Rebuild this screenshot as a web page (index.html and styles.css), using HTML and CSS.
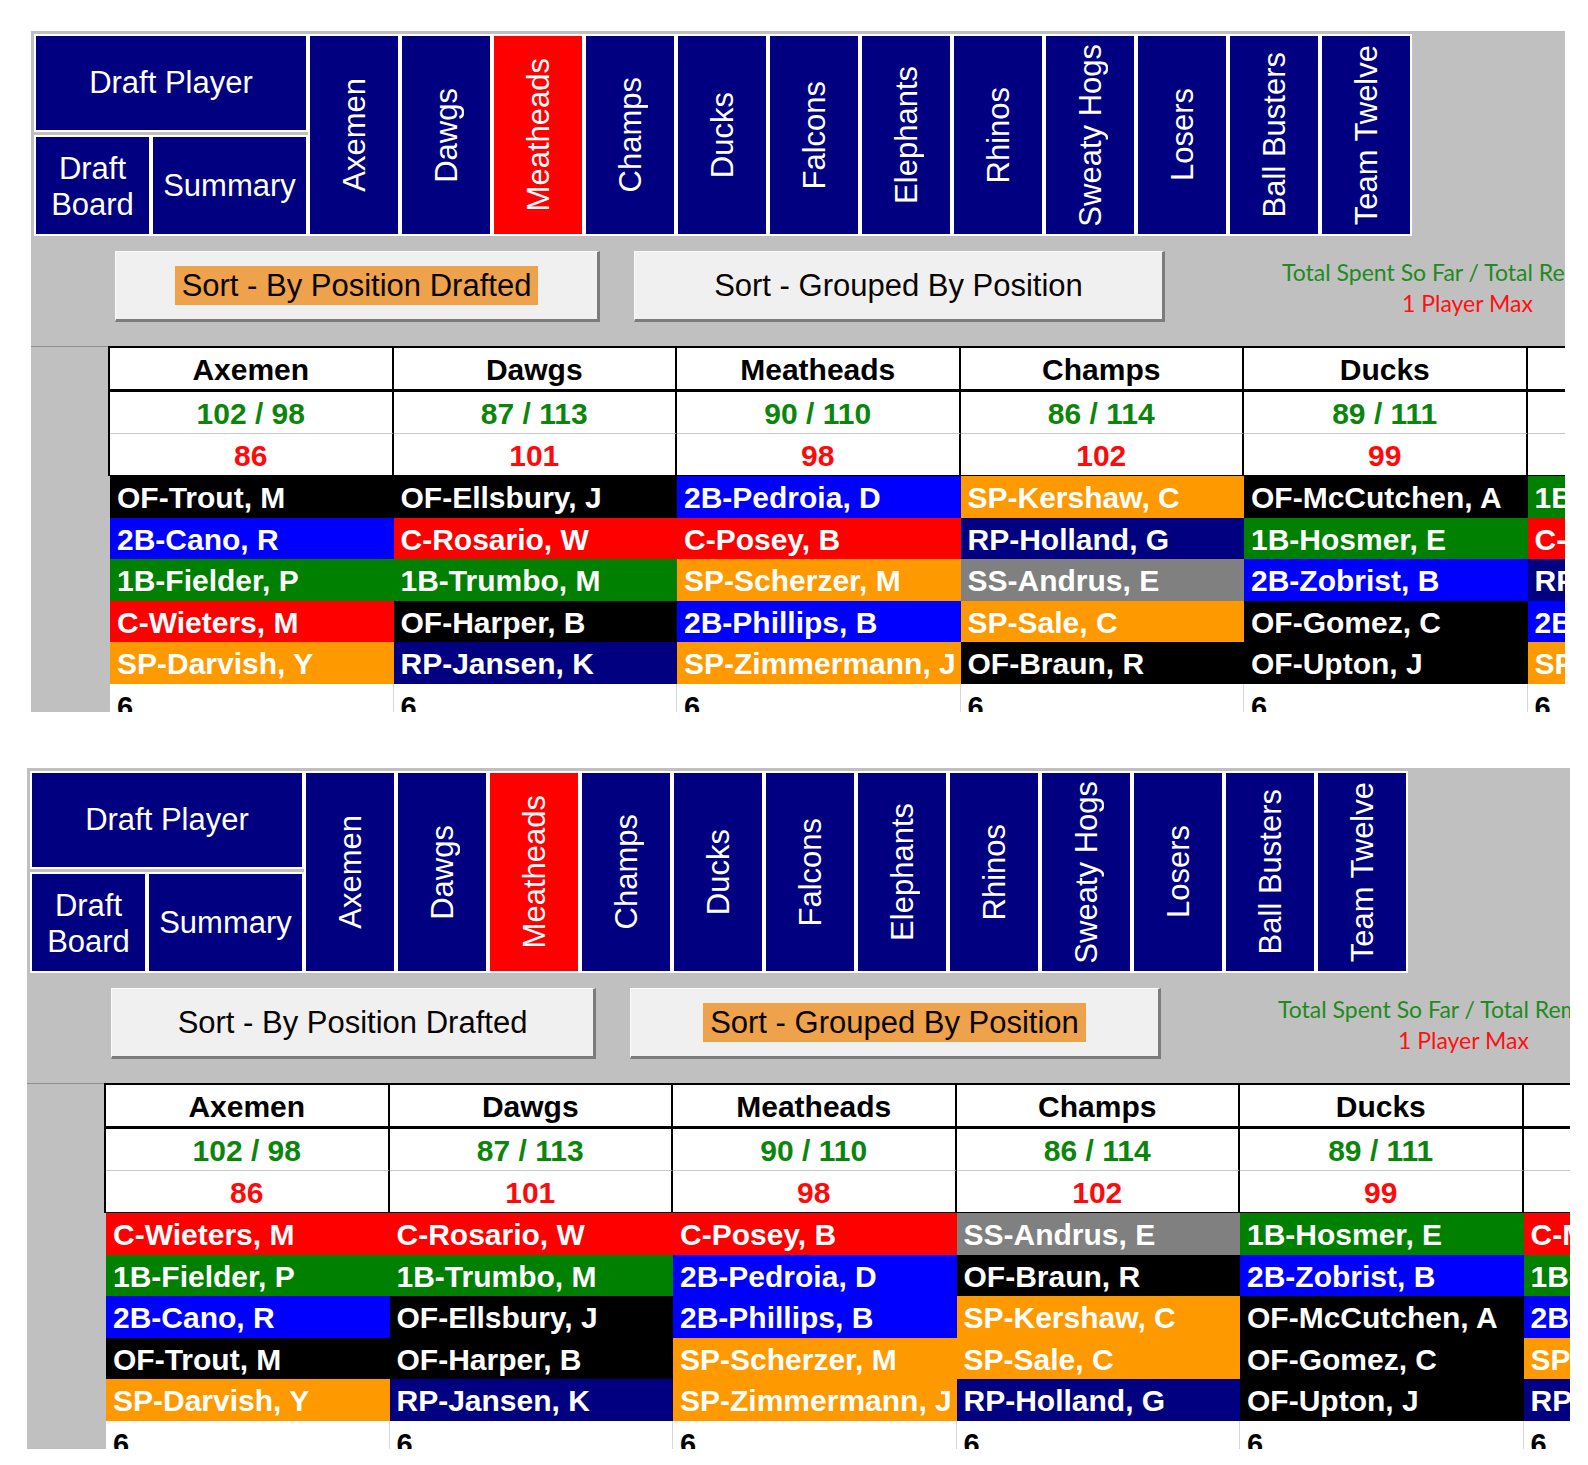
FILE: index.html
```html
<!DOCTYPE html>
<html>
<head>
<meta charset="utf-8">
<title>Draft Board</title>
<link rel="stylesheet" href="styles.css">
</head>
<body>

<div class="panel panel-a">
  <div class="nav">
    <div class="nav-left">
      <div class="nbtn draft-player">Draft Player</div>
      <div class="nav-left-row">
        <div class="nbtn draft-board">Draft<br>Board</div>
        <div class="nbtn summary">Summary</div>
      </div>
    </div>
    <div class="tab"><span>Axemen</span></div>
    <div class="tab"><span>Dawgs</span></div>
    <div class="tab tab-active"><span>Meatheads</span></div>
    <div class="tab"><span>Champs</span></div>
    <div class="tab"><span>Ducks</span></div>
    <div class="tab"><span>Falcons</span></div>
    <div class="tab"><span>Elephants</span></div>
    <div class="tab"><span>Rhinos</span></div>
    <div class="tab"><span>Sweaty Hogs</span></div>
    <div class="tab"><span>Losers</span></div>
    <div class="tab"><span>Ball Busters</span></div>
    <div class="tab"><span>Team Twelve</span></div>
  </div>
  <div class="sort-row">
    <div class="sort-btn sort-1"><span class="sort-label hl">Sort - By Position Drafted</span></div>
    <div class="sort-btn sort-2"><span class="sort-label">Sort - Grouped By Position</span></div>
    <div class="legend">
      <div class="legend-green">Total Spent So Far / Total Remaining</div>
      <div class="legend-red">1 Player Max</div>
    </div>
  </div>
  <div class="board">
    <div class="stripe"></div>
    <div class="teams">
      <div class="team first">
        <div class="c-name">Axemen</div>
        <div class="c-spent">102 / 98</div>
        <div class="c-max">86</div>
        <div class="p of">OF-Trout, M</div>
        <div class="p b2">2B-Cano, R</div>
        <div class="p b1">1B-Fielder, P</div>
        <div class="p c">C-Wieters, M</div>
        <div class="p sp">SP-Darvish, Y</div>
        <div class="c-count">6</div>
      </div>
      <div class="team">
        <div class="c-name">Dawgs</div>
        <div class="c-spent">87 / 113</div>
        <div class="c-max">101</div>
        <div class="p of">OF-Ellsbury, J</div>
        <div class="p c">C-Rosario, W</div>
        <div class="p b1">1B-Trumbo, M</div>
        <div class="p of">OF-Harper, B</div>
        <div class="p rp">RP-Jansen, K</div>
        <div class="c-count">6</div>
      </div>
      <div class="team">
        <div class="c-name">Meatheads</div>
        <div class="c-spent">90 / 110</div>
        <div class="c-max">98</div>
        <div class="p b2">2B-Pedroia, D</div>
        <div class="p c">C-Posey, B</div>
        <div class="p sp">SP-Scherzer, M</div>
        <div class="p b2">2B-Phillips, B</div>
        <div class="p sp">SP-Zimmermann, J</div>
        <div class="c-count">6</div>
      </div>
      <div class="team">
        <div class="c-name">Champs</div>
        <div class="c-spent">86 / 114</div>
        <div class="c-max">102</div>
        <div class="p sp">SP-Kershaw, C</div>
        <div class="p rp">RP-Holland, G</div>
        <div class="p ss">SS-Andrus, E</div>
        <div class="p sp">SP-Sale, C</div>
        <div class="p of">OF-Braun, R</div>
        <div class="c-count">6</div>
      </div>
      <div class="team">
        <div class="c-name">Ducks</div>
        <div class="c-spent">89 / 111</div>
        <div class="c-max">99</div>
        <div class="p of">OF-McCutchen, A</div>
        <div class="p b1">1B-Hosmer, E</div>
        <div class="p b2">2B-Zobrist, B</div>
        <div class="p of">OF-Gomez, C</div>
        <div class="p of">OF-Upton, J</div>
        <div class="c-count">6</div>
      </div>
      <div class="team">
        <div class="c-name">Falcons</div>
        <div class="c-spent">91 / 109</div>
        <div class="c-max">97</div>
        <div class="p b1">1B-Goldschmidt, P</div>
        <div class="p c">C-Mauer, J</div>
        <div class="p rp">RP-Kimbrel, C</div>
        <div class="p b2">2B-Kinsler, I</div>
        <div class="p sp">SP-Verlander, J</div>
        <div class="c-count">6</div>
      </div>
    </div>
  </div>
</div>

<div class="panel panel-b">
  <div class="nav">
    <div class="nav-left">
      <div class="nbtn draft-player">Draft Player</div>
      <div class="nav-left-row">
        <div class="nbtn draft-board">Draft<br>Board</div>
        <div class="nbtn summary">Summary</div>
      </div>
    </div>
    <div class="tab"><span>Axemen</span></div>
    <div class="tab"><span>Dawgs</span></div>
    <div class="tab tab-active"><span>Meatheads</span></div>
    <div class="tab"><span>Champs</span></div>
    <div class="tab"><span>Ducks</span></div>
    <div class="tab"><span>Falcons</span></div>
    <div class="tab"><span>Elephants</span></div>
    <div class="tab"><span>Rhinos</span></div>
    <div class="tab"><span>Sweaty Hogs</span></div>
    <div class="tab"><span>Losers</span></div>
    <div class="tab"><span>Ball Busters</span></div>
    <div class="tab"><span>Team Twelve</span></div>
  </div>
  <div class="sort-row">
    <div class="sort-btn sort-1"><span class="sort-label">Sort - By Position Drafted</span></div>
    <div class="sort-btn sort-2"><span class="sort-label hl">Sort - Grouped By Position</span></div>
    <div class="legend">
      <div class="legend-green">Total Spent So Far / Total Remaining</div>
      <div class="legend-red">1 Player Max</div>
    </div>
  </div>
  <div class="board">
    <div class="stripe"></div>
    <div class="teams">
      <div class="team first">
        <div class="c-name">Axemen</div>
        <div class="c-spent">102 / 98</div>
        <div class="c-max">86</div>
        <div class="p c">C-Wieters, M</div>
        <div class="p b1">1B-Fielder, P</div>
        <div class="p b2">2B-Cano, R</div>
        <div class="p of">OF-Trout, M</div>
        <div class="p sp">SP-Darvish, Y</div>
        <div class="c-count">6</div>
      </div>
      <div class="team">
        <div class="c-name">Dawgs</div>
        <div class="c-spent">87 / 113</div>
        <div class="c-max">101</div>
        <div class="p c">C-Rosario, W</div>
        <div class="p b1">1B-Trumbo, M</div>
        <div class="p of">OF-Ellsbury, J</div>
        <div class="p of">OF-Harper, B</div>
        <div class="p rp">RP-Jansen, K</div>
        <div class="c-count">6</div>
      </div>
      <div class="team">
        <div class="c-name">Meatheads</div>
        <div class="c-spent">90 / 110</div>
        <div class="c-max">98</div>
        <div class="p c">C-Posey, B</div>
        <div class="p b2">2B-Pedroia, D</div>
        <div class="p b2">2B-Phillips, B</div>
        <div class="p sp">SP-Scherzer, M</div>
        <div class="p sp">SP-Zimmermann, J</div>
        <div class="c-count">6</div>
      </div>
      <div class="team">
        <div class="c-name">Champs</div>
        <div class="c-spent">86 / 114</div>
        <div class="c-max">102</div>
        <div class="p ss">SS-Andrus, E</div>
        <div class="p of">OF-Braun, R</div>
        <div class="p sp">SP-Kershaw, C</div>
        <div class="p sp">SP-Sale, C</div>
        <div class="p rp">RP-Holland, G</div>
        <div class="c-count">6</div>
      </div>
      <div class="team">
        <div class="c-name">Ducks</div>
        <div class="c-spent">89 / 111</div>
        <div class="c-max">99</div>
        <div class="p b1">1B-Hosmer, E</div>
        <div class="p b2">2B-Zobrist, B</div>
        <div class="p of">OF-McCutchen, A</div>
        <div class="p of">OF-Gomez, C</div>
        <div class="p of">OF-Upton, J</div>
        <div class="c-count">6</div>
      </div>
      <div class="team">
        <div class="c-name">Falcons</div>
        <div class="c-spent">91 / 109</div>
        <div class="c-max">97</div>
        <div class="p c">C-Mauer, J</div>
        <div class="p b1">1B-Goldschmidt, P</div>
        <div class="p b2">2B-Kinsler, I</div>
        <div class="p sp">SP-Verlander, J</div>
        <div class="p rp">RP-Kimbrel, C</div>
        <div class="c-count">6</div>
      </div>
    </div>
  </div>
</div>

</body>
</html>
```

FILE: styles.css
```css
* { box-sizing: border-box; }

html, body {
  margin: 0;
  padding: 0;
  background: #ffffff;
}

body {
  font-family: "Liberation Sans", Arial, sans-serif;
  width: 1588px;
  min-height: 1465px;
  overflow: hidden;
}

.panel {
  background: #c0c0c0;
  height: 681px;
  overflow: hidden;
  padding-top: 3px;
}

.panel-a {
  margin-left: 31px;
  margin-top: 31px;
  width: 1534px;
}

.panel-b {
  margin-left: 27px;
  margin-top: 56px;
  width: 1543px;
}

/* ---------- navigation ---------- */
.nav {
  display: flex;
  padding-left: 3px;
  height: 202px;
}

.nav-left {
  width: 274px;
  flex: none;
  display: flex;
  flex-direction: column;
  gap: 3px;
}

.nav-left-row {
  display: flex;
  flex: 1;
}

.nbtn {
  background: #000080;
  color: #ffffff;
  border: 2px solid #ffffff;
  font-size: 31px;
  display: flex;
  align-items: center;
  justify-content: center;
  text-align: center;
}

.draft-player {
  height: 98px;
}

.draft-board {
  width: 117px;
  line-height: 36px;
  padding-top: 2px;
}

.summary {
  flex: 1;
}

.tab {
  width: 92px;
  flex: none;
  background: #000080;
  color: #ffffff;
  border: 2px solid #ffffff;
  display: flex;
  align-items: center;
  justify-content: center;
  font-size: 31px;
  white-space: nowrap;
}

.tab span {
  writing-mode: vertical-rl;
  transform: rotate(180deg);
  line-height: 1;
}

.tab-active {
  background: #ff0000;
}

/* ---------- sort row ---------- */
.sort-row {
  display: flex;
  margin-top: 15px;
  height: 71px;
}

.sort-btn {
  flex: none;
  background: #f0f0f0;
  border-top: 1px solid #fbfbfb;
  border-left: 1px solid #fbfbfb;
  border-right: 3px solid #7c7c7c;
  border-bottom: 3px solid #7c7c7c;
  display: flex;
  align-items: center;
  justify-content: center;
  font-size: 31px;
  color: #0a0505;
}

.sort-1 {
  margin-left: 84px;
  width: 485px;
}

.sort-2 {
  margin-left: 34px;
  width: 531px;
}

.sort-label {
  line-height: 39px;
  padding: 0 7px;
  white-space: nowrap;
}

.hl {
  background: #eda24b;
}

.legend {
  flex: none;
  margin-left: 117px;
  padding-top: 6px;
  font-family: Lato, "Open Sans", sans-serif;
  font-size: 23px;
  line-height: 31px;
  white-space: nowrap;
}

.legend-green {
  color: #1f8a1f;
}

.legend-red {
  color: #ff1010;
  padding-left: 120px;
}

/* ---------- board ---------- */
.board {
  display: flex;
  margin-top: 24px;
  border-top: 1px solid #8e8e8e;
}

.stripe {
  width: 79px;
  flex: none;
}

.teams {
  display: flex;
  background: #ffffff;
  margin-top: -1px;
}

.team {
  width: 283.5px;
  flex: none;
  display: flex;
  flex-direction: column;
}

.c-name,
.c-spent,
.c-max {
  text-align: center;
  font-weight: bold;
  font-size: 30px;
  border-right: 2px solid #000000;
  background: #ffffff;
}

.c-name {
  height: 46px;
  line-height: 43px;
  border-top: 2px solid #000000;
  border-bottom: 3px solid #000000;
  color: #000000;
}

.c-spent {
  height: 42px;
  line-height: 43px;
  color: #0c850c;
  border-bottom: 1px solid #c8c8c8;
}

.c-max {
  height: 42px;
  line-height: 43px;
  color: #ff0a0a;
  border-bottom: 1px solid #000000;
}

.first .c-name,
.first .c-spent,
.first .c-max {
  box-shadow: -2px 0 0 #000000;
}

.p {
  height: 41.6px;
  line-height: 43px;
  padding-left: 7px;
  font-size: 30px;
  font-weight: bold;
  color: #ffffff;
  white-space: nowrap;
  overflow: hidden;
}

.of { background: #000000; }
.b2 { background: #0000ff; }
.b1 { background: #008000; }
.c  { background: #ff0000; }
.sp { background: #ff9900; }
.rp { background: #000080; }
.ss { background: #808080; }

.c-count {
  height: 42px;
  line-height: 46px;
  padding-left: 7px;
  font-size: 29px;
  font-weight: bold;
  color: #000000;
  border-right: 1px solid #d6d6d6;
}
```
